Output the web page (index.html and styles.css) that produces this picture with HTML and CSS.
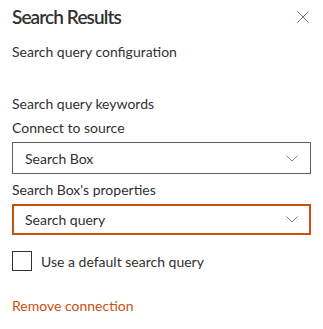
FILE: index.html
```html
<!DOCTYPE html>
<html lang="en">
<head>
    <meta charset="UTF-8">
    <meta name="viewport" content="width=device-width, initial-scale=1.0">
    <title>Search Results</title>
    <link rel="stylesheet" href="styles.css">
</head>
<body>
    <div class="panel">
        <div class="panel-header">
            <h1 class="panel-title">Search Results</h1>
            <button class="close-btn" aria-label="Close">
                <svg width="12" height="12" viewBox="0 0 12 12">
                    <path d="M0.5 0.5 L11.5 11.5 M11.5 0.5 L0.5 11.5" stroke="#8a6d5c" stroke-width="1" fill="none"/>
                </svg>
            </button>
        </div>

        <p class="section-desc">Search query configuration</p>

        <p class="field-group">Search query keywords</p>

        <label class="field-label">Connect to source</label>
        <div class="dropdown">
            <span>Search Box</span>
            <svg class="chevron" width="12" height="7" viewBox="0 0 12 7">
                <path d="M0.5 0.5 L6 6 L11.5 0.5" stroke="#8a7f7a" stroke-width="1" fill="none"/>
            </svg>
        </div>

        <label class="field-label">Search Box's properties</label>
        <div class="dropdown focused">
            <span>Search query</span>
            <svg class="chevron" width="12" height="7" viewBox="0 0 12 7">
                <path d="M0.5 0.5 L6 6 L11.5 0.5" stroke="#8a7f7a" stroke-width="1" fill="none"/>
            </svg>
        </div>

        <label class="checkbox-row">
            <span class="checkbox"></span>
            <span>Use a default search query</span>
        </label>

        <a class="remove-link" href="#">Remove connection</a>
    </div>
</body>
</html>
```

FILE: styles.css
```css
body {
    margin: 0;
    font-family: Lato, "Noto Sans", sans-serif;
    font-size: 14px;
    color: #323130;
    background-color: white;
}
.panel {
    padding: 0 12px;
}
.panel-header {
    display: flex;
    justify-content: space-between;
    align-items: center;
    padding-top: 3px;
}
.panel-title {
    margin: 0;
    font-size: 19px;
    font-weight: 600;
    letter-spacing: -0.9px;
    line-height: 28px;
}
.close-btn {
    background: none;
    border: none;
    padding: 0;
    margin-right: 2px;
    display: flex;
    cursor: pointer;
}
.section-desc {
    margin: 11px 0 0;
    line-height: 20px;
}
.field-group {
    margin: 32px 0 0;
    line-height: 20px;
}
.field-label {
    display: block;
    margin-top: 4px;
    line-height: 20px;
}
.dropdown {
    display: flex;
    align-items: center;
    justify-content: space-between;
    height: 32px;
    box-sizing: border-box;
    border: 1px solid #605e5c;
    margin: 4px 0 6px;
    padding: 0 12px;
}
.dropdown.focused {
    border: 2px solid #ca5010;
    height: 31px;
    padding: 0 11px;
}
.checkbox-row {
    display: flex;
    align-items: center;
    gap: 9px;
    margin-top: 16px;
}
.checkbox {
    width: 20px;
    height: 20px;
    box-sizing: border-box;
    border: 1px solid #323130;
}
.remove-link {
    display: block;
    margin-top: 25px;
    line-height: 20px;
    color: #ca5010;
    text-decoration: none;
}
```
